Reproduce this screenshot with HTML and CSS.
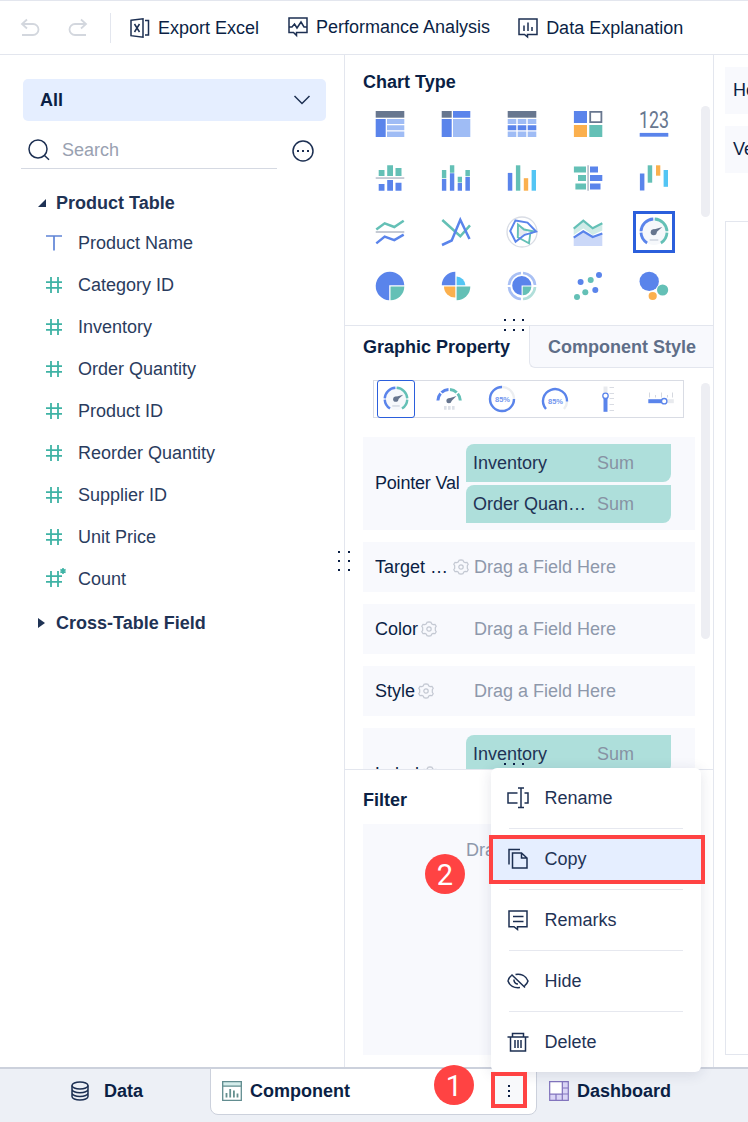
FILE: index.html
```html
<!DOCTYPE html>
<html lang="en">
<head>
    <meta charset="UTF-8">
    <meta name="viewport" content="width=device-width, initial-scale=1.0">
    <title>Component</title>
    <link rel="stylesheet" href="styles.css">
</head>
<body>
    <!-- shared icons -->
    <svg class="sprite">
        <symbol id="hash" viewBox="0 0 18 18"><path d="M6 1v16M13 1v16M1 6.200h16M1 11.800h16" fill="none" stroke="#3fb3a5" stroke-width="1.800"/></symbol>
        <symbol id="gear" viewBox="0 0 16 16"><g fill="none" stroke="#c3c8d2" stroke-width="1.200"><path d="M8 .8l2 .4.6 1.700 1.500.7 1.900-.3 1.200 1.900-.9 1.500v2.600l.9 1.500-1.200 1.900-1.900-.3-1.500.8-.6 1.500-2 .4-2-.4-.6-1.500-1.500-.8-1.900.3L.8 10.800l.9-1.500V6.700L.8 5.200 2 3.300l1.900.3 1.500-.7.6-1.700z"/><circle cx="8" cy="8" r="2.200"/></g></symbol>
        <symbol id="gauge" viewBox="0 0 30 30">
            <circle cx="15" cy="15" r="13" fill="#f6f8fb"/>
            <g fill="none" stroke-width="2.800">
                <path d="M8.100 26A13 13 0 0 1 2 15.700" stroke="#5a84eb"/>
                <path d="M2 14.300A13 13 0 0 1 14.300 2" stroke="#5a84eb"/>
                <path d="M15.700 2A13 13 0 0 1 28 14.300" stroke="#64c0b6"/>
                <path d="M28 15.700A13 13 0 0 1 21.900 26" stroke="#64c0b6"/>
            </g>
            <path d="M14 12.700l9.300-2.700-7 6.300z" fill="#66758e"/>
            <circle cx="14.700" cy="15.200" r="3" fill="#66758e"/>
            <path d="M10.700 23h8.600" stroke="#d8dde6" stroke-width="2"/>
        </symbol>
    </svg>

    <header class="toolbar">
        <svg class="undo" viewBox="0 0 20 20"><path d="M7 1.500L2 6l5 4.500M2 6h11a5.300 5.300 0 0 1 0 11H2" /></svg>
        <svg class="redo" viewBox="0 0 20 20"><path d="M13 1.500L18 6l-5 4.500M18 6H7a5.300 5.300 0 0 0 0 11h11" /></svg>
        <span class="separator"></span>
        <div class="tool excel">
            <svg class="line-icon" viewBox="0 0 20 20"><path d="M1 2.300l12-1.500v18.400L1 17.700zM4.500 6l5 8M9.500 6l-5 8M15 2.500h3.500v14.500H15"/></svg>
            Export Excel
        </div>
        <div class="tool performance">
            <svg class="line-icon" viewBox="0 0 20 20"><path d="M1 1h18v14.500H8.500v3l-3-3H1zM1 10h3l2.500-3 2.500 4 4-6 3 5h3"/></svg>
            Performance Analysis
        </div>
        <div class="tool explain">
            <svg class="line-icon" viewBox="0 0 20 20"><path d="M1 1h18v15.500H9.500v2.500l-3-2.500H1zM6 7.500V13M10 4.500V13M14 9V13"/></svg>
            Data Explanation
        </div>
    </header>

    <main class="workspace">
        <section class="fields">
            <div class="select">
                <span>All</span>
                <svg class="line-icon chevron" viewBox="0 0 18 10"><path d="M1.500 1l7.500 7.500L16.500 1"/></svg>
            </div>
            <div class="search-row">
                <div class="search">
                    <svg class="line-icon" viewBox="0 0 22 22"><circle cx="10" cy="10" r="9"/><path d="M16.500 16.500l4.500 4.300"/></svg>
                    <span>Search</span>
                </div>
                <svg class="line-icon more" viewBox="0 0 22 22"><circle cx="11" cy="11" r="10"/><path class="dots" d="M5 10h2v2H5zM10 10h2v2h-2zM15 10h2v2h-2z"/></svg>
            </div>
            <div class="group">
                <svg viewBox="0 0 10 10"><path d="M9 1v8H1z"/></svg>
                Product Table
            </div>
            <ul class="field-list">
                <li><svg viewBox="0 0 18 18"><path d="M1 2h16M9 2v14.500" fill="none" stroke="#5f84d6" stroke-width="1.700"/></svg>Product Name</li>
                <li><svg><use href="#hash"/></svg>Category ID</li>
                <li><svg><use href="#hash"/></svg>Inventory</li>
                <li><svg><use href="#hash"/></svg>Order Quantity</li>
                <li><svg><use href="#hash"/></svg>Product ID</li>
                <li><svg><use href="#hash"/></svg>Reorder Quantity</li>
                <li><svg><use href="#hash"/></svg>Supplier ID</li>
                <li><svg><use href="#hash"/></svg>Unit Price</li>
                <li><svg><use href="#hash"/><path d="M18 -2v6M15.400 -.5l5.200 3M20.600 -.5l-5.200 3" stroke="#3fb3a5" stroke-width="1.600"/></svg>Count</li>
            </ul>
            <div class="group cross">
                <svg viewBox="0 0 10 10"><path d="M1 0l7 5-7 5z"/></svg>
                Cross-Table Field
            </div>
            <div class="grip vertical"><i></i><i></i><i></i><i></i><i></i><i></i></div>
        </section>

        <section class="config">
            <div class="chart-type">
                <h2>Chart Type</h2>
                <div class="charts">
                    <div class="chart"><svg viewBox="0 0 30 30"><path fill="#68778f" d="M.7 2h28.600v6.700H.7z"/><path fill="#5a84eb" d="M.7 10H10.700v18H.7z"/><path fill="#9fbcf5" d="M12 10h17.300v5H12zM12 16.200h17.300v5H12zM12 22.500h17.300V28H12z"/></svg></div>
                    <div class="chart"><svg viewBox="0 0 30 30"><path fill="#68778f" d="M.7 2h10v6.700h-10z"/><path fill="#5a84eb" d="M12 2h17.300v6.700H12zM.7 10h10v18h-10z"/><path fill="#9fbcf5" d="M12 10h17.300v18H12z"/></svg></div>
                    <div class="chart"><svg viewBox="0 0 30 30"><path fill="#68778f" d="M.7 2h28.600v6.700H.7z"/><path fill="#9fbcf5" d="M.7 10h8.600v5H.7zM10.700 10h8.600v5h-8.600zM20.700 10h8.600v5h-8.600zM.7 22.500h8.600V28H.7zM10.700 22.500h8.600V28h-8.600zM20.700 22.500h8.600V28h-8.600z"/><path fill="#5a84eb" d="M.7 16.200h8.600v5H.7zM10.700 16.200h8.600v5h-8.600zM20.700 16.200h8.600v5h-8.600z"/></svg></div>
                    <div class="chart"><svg viewBox="0 0 30 30"><path fill="#5a84eb" d="M.9 2H14v12H.9z"/><path fill="none" stroke="#68778f" stroke-width="1.800" d="M17.200 2.900h11.200v10.200H17.200z"/><path fill="#fbb04e" d="M.9 16H14v12H.9z"/><path fill="#64c0b6" d="M16.300 16h13v12h-13z"/></svg></div>
                    <div class="chart"><svg viewBox="0 0 30 30"><text class="digits" x="0" y="19.300" textLength="30" lengthAdjust="spacingAndGlyphs">123</text><path fill="#5a84eb" d="M.7 23.900h28.600v3.800H.7z"/></svg></div>

                    <div class="chart"><svg viewBox="0 0 30 30"><path fill="#64c0b6" d="M3.700 7h5.800v6H3.700zM12.200 2.300H18V13h-5.800zM20.500 5h6v8h-6z"/><path fill="#bfc5d0" d="M.7 14.200h28.600v1.700H.7z"/><path fill="#5a84eb" d="M3.700 21h5.800v6.700H3.700zM12.200 17H18v10.700h-5.800zM20.500 19.700h6v8h-6z"/></svg></div>
                    <div class="chart"><svg viewBox="0 0 30 30"><path fill="#64c0b6" d="M.9 7h4.400v8.300H.9zM8.900 2.300h4.400v7.500H8.900zM16.700 13.700H21v5.700h-4.300zM24.400 7h4.500v6.300h-4.500z"/><path fill="#5a84eb" d="M.9 15.900h4.400v11.800H.9zM8.900 10.200h4.400v17.500H8.900zM16.700 20H21v7.700h-4.300zM24.400 14h4.500v13.700h-4.500z"/></svg></div>
                    <div class="chart"><svg viewBox="0 0 30 30"><path fill="#5a84eb" d="M.8 9.900h4.500v17.800H.8z"/><path fill="#64c0b6" d="M8.900 2.300h4.400v25.400H8.900z"/><path fill="#fbb04e" d="M16.800 15.200h4.400v12.500h-4.400z"/><path fill="#53c5f4" d="M24.600 7H29v20.700h-4.400z"/></svg></div>
                    <div class="chart"><svg viewBox="0 0 30 30"><path fill="#64c0b6" d="M.9 3.500H13v6H.9zM5 12h8v6H5zM2.400 20.400H13v6H2.400z"/><path fill="#bfc5d0" d="M14.200 2.300H16v25.400h-1.800z"/><path fill="#5a84eb" d="M17 3.500h8v6h-8zM17 12h12.300v6H17zM17 20.400h10.500v6H17z"/></svg></div>
                    <div class="chart"><svg viewBox="0 0 30 30"><path fill="#5a84eb" d="M.9 10.500h4.500v17H.9z"/><path fill="#64c0b6" d="M8.700 2.300h4.500v17.400H8.700z"/><path fill="#fbb04e" d="M17 2.300h4.300v10.400H17z"/><path fill="#53c5f4" d="M24.600 7H29v16.800h-4.400z"/></svg></div>

                    <div class="chart"><svg viewBox="0 0 30 30"><g fill="none" stroke-width="2.500"><path stroke="#64c0b6" d="M1.300 12.600l8.400-6.300L19.300 10 28.700 3.700"/><path stroke="#bfc5d0" stroke-width="1.800" d="M.7 15h28.600"/><path stroke="#5a84eb" d="M1.300 26.400l8.400-6.800 9.600 3.500 9.400-5.400"/></g></svg></div>
                    <div class="chart"><svg viewBox="0 0 30 30"><g fill="none" stroke-width="2.500"><path stroke="#64c0b6" d="M1.300 3l18 16.300L29 8.300"/><path stroke="#5a84eb" d="M1 28l9.700-4.500 8.600-20.700L28.500 22"/></g></svg></div>
                    <div class="chart"><svg viewBox="0 0 30 30"><g fill="none"><circle cx="15" cy="15" r="15" stroke="#d9dde5" stroke-width="1.300"/><circle cx="15" cy="15" r="5" fill="#e8ebf0"/><path stroke="#64c0b6" stroke-width="1.900" d="M11 7.500l6 5 10 2-3.700 2L22 26.300l-11.200-6z"/><path stroke="#5a84eb" stroke-width="2" d="M8.500 3.400l12 2.200 8.600 9-11.500 3.200-9 6.900L3.200 14z"/></g></svg></div>
                    <div class="chart"><svg viewBox="0 0 30 30"><path fill="#cfebe7" d="M.7 11.500L10.300 4l9.400 7.500 9.600-5v7L19.700 18l-9.400-6.500L.7 18z"/><path fill="#cbd8f8" d="M.7 20.700l9.600-6.400 9.400 5.700 9.600-3.500V29H.7z"/><g fill="none" stroke-width="2.200"><path stroke="#64c0b6" d="M.7 11.600l9.600-7.900 9.400 7.600 9.600-5"/><path stroke="#5a84eb" d="M.7 20.700l9.600-6.400 9.400 5.700 9.600-3.500"/></g></svg></div>
                    <div class="chart active"><svg><use href="#gauge"/></svg></div>

                    <div class="chart"><svg viewBox="0 0 30 30"><path fill="#5a84eb" d="M14.200 14.200V29.300A14.300 14.300 0 1 1 29.300 14.200z"/><path fill="#64c0b6" d="M15.500 15.500h13.800A13.800 13.800 0 0 1 15.500 29.300z"/></svg></div>
                    <div class="chart"><svg viewBox="0 0 30 30"><path fill="#5a84eb" d="M14.300 14.300V.8A13.500 13.500 0 0 0 .8 14.300z"/><path fill="#53c5f4" d="M15.600 14.300V5.500a9 9 0 0 1 8.800 8.800z"/><path fill="#fbb04e" d="M14.300 15.600v11A11 11 0 0 1 3 15.600z"/><path fill="#64c0b6" d="M15.600 15.600h13.700a13.600 13.600 0 0 1-13.700 13.700z"/></svg></div>
                    <div class="chart"><svg viewBox="0 0 30 30"><g fill="none" stroke-width="2.700"><path stroke="#a9c0f4" d="M16 2a13 13 0 0 1 12 12M2 14A13 13 0 0 1 14 2M14 28A13 13 0 0 1 2 16"/><path stroke="#b1dfda" d="M28 16a13 13 0 0 1-12 12"/></g><path fill="#5a84eb" d="M14.600 14.400v9.800a9.600 9.600 0 1 1 9.800-9.800z"/><path fill="#64c0b6" d="M15.700 15.600h8.700a9 9 0 0 1-8.700 8.700z"/></svg></div>
                    <div class="chart"><svg viewBox="0 0 30 30"><g fill="#64c0b6"><circle cx="4" cy="26" r="3"/><circle cx="12.300" cy="21.300" r="3"/><circle cx="17.700" cy="9" r="3"/></g><g fill="#5a84eb"><circle cx="22.300" cy="19" r="3"/><circle cx="7.600" cy="11" r="3"/><circle cx="26" cy="4" r="3"/></g></svg></div>
                    <div class="chart"><svg viewBox="0 0 30 30"><circle cx="10.200" cy="10.400" r="9.700" fill="#5a84eb"/><circle cx="23.600" cy="19" r="5.600" fill="#64c0b6"/><circle cx="13.700" cy="25" r="4.100" fill="#fbb04e"/></svg></div>
                </div>
                <div class="scrollbar"></div>
            </div>

            <div class="property">
                <div class="tabs">
                    <div class="tab current">Graphic Property</div>
                    <div class="tab">Component Style</div>
                </div>
                <div class="styles">
                    <div class="style active"><svg><use href="#gauge"/></svg></div>
                    <div class="style"><svg viewBox="0 0 26 26"><g fill="none" stroke-width="3"><path stroke="#5a84eb" d="M1.900 14.500a11 11 0 0 1 2.700-6.900M5.500 6.500A11 11 0 0 1 12.500 3.500"/><path stroke="#64c0b6" d="M14 3.500a11 11 0 0 1 6.700 3M21.700 7.600a11 11 0 0 1 2.600 6.900"/></g><path d="M12.500 12.500l8-2.500-6 6z" fill="#66758e"/><circle cx="12.900" cy="14.800" r="2.500" fill="#66758e"/><path fill="#dde1e8" d="M8 20h2.600v3.800H8zM12 20h2.600v3.800H12zM16 20h2.600v3.800H16z"/></svg></div>
                    <div class="style"><svg viewBox="0 0 26 26"><g fill="none" stroke-width="2.400"><circle cx="13" cy="13" r="12" stroke="#eceef1"/><path stroke="#5a84eb" d="M25 13A12 12 0 1 1 13 1"/></g><text class="percent" x="13.500" y="15.700">85%</text></svg></div>
                    <div class="style"><svg viewBox="0 0 26 26"><g fill="none" stroke-width="2.400"><path stroke="#eceef1" d="M25 15.500a12 12 0 0 1-3 7.500"/><path stroke="#5a84eb" d="M4 23A12 12 0 1 1 25 15.500"/></g><text class="percent" x="13.500" y="17.700">85%</text></svg></div>
                    <div class="style"><svg viewBox="0 0 26 26"><path fill="none" stroke="#e8eaee" d="M10.500 .5v13" stroke-width="4"/><path stroke="#d9dce3" d="M14.500 1.500H19M14.500 7.500H19M14.500 12.500H19M14.500 18.500H19M14.500 24.500H19"/><path stroke="#5a84eb" stroke-width="4" d="M10.500 10v15.800"/><circle cx="10.500" cy="9.800" r="2.700" fill="#fff" stroke="#5a84eb" stroke-width="1.300"/></svg></div>
                    <div class="style"><svg viewBox="0 0 26 26"><path stroke="#e8eaee" stroke-width="4" d="M15 15.200h10.800"/><path stroke="#d5d8df" d="M1.500 6.500v5M7.500 9v2.500M13.500 6.500v5M19.500 9v2.500M24.500 6.500v5"/><path stroke="#5a84eb" stroke-width="4" d="M.3 15.200H16"/><circle cx="16.200" cy="15.200" r="2.700" fill="#fff" stroke="#5a84eb" stroke-width="1.300"/></svg></div>
                </div>
                <div class="rows">
                    <div class="row">
                        <div class="label pointer">Pointer Value</div>
                        <div class="chips">
                            <div class="chip"><span>Inventory</span><em>Sum</em></div>
                            <div class="chip"><span>Order Quantity</span><em>Sum</em></div>
                        </div>
                    </div>
                    <div class="row">
                        <div class="label wide"><span class="target">Target Value</span><svg><use href="#gear"/></svg></div>
                        <div class="hint">Drag a Field Here</div>
                    </div>
                    <div class="row">
                        <div class="label">Color<svg><use href="#gear"/></svg></div>
                        <div class="hint">Drag a Field Here</div>
                    </div>
                    <div class="row">
                        <div class="label">Style<svg><use href="#gear"/></svg></div>
                        <div class="hint">Drag a Field Here</div>
                    </div>
                    <div class="row">
                        <div class="label bottom-label">Label<svg><use href="#gear"/></svg></div>
                        <div class="chips">
                            <div class="chip"><span>Inventory</span><em>Sum</em></div>
                            <div class="chip"><span>Order Quantity</span><em>Sum</em></div>
                        </div>
                    </div>
                </div>
                <div class="scrollbar"></div>
                <div class="grip"><i></i><i></i><i></i><i></i><i></i><i></i></div>
            </div>

            <div class="filter">
                <h2>Filter</h2>
                <div class="drop">Drag a Field Here</div>
                <div class="grip"><i></i><i></i><i></i></div>
            </div>
        </section>

        <section class="canvas">
            <div class="axis">Horizontal Axis</div>
            <div class="axis">Vertical Axis</div>
            <div class="preview"></div>
        </section>
    </main>

    <footer class="bottom">
        <div class="page data">
            <svg class="line-icon" viewBox="0 0 20 20"><ellipse cx="10" cy="4.500" rx="8" ry="3.500"/><path d="M2 4.500v11c0 2 3.600 3.500 8 3.500s8-1.500 8-3.500v-11M2 8.300c0 2 3.600 3.500 8 3.500s8-1.500 8-3.500M2 12c0 2 3.600 3.500 8 3.500s8-1.500 8-3.500"/></svg>
            Data
        </div>
        <div class="page component">
            <svg viewBox="0 0 20 20"><g fill="none" stroke="#628d90" stroke-width="1.300"><path fill="#fff" d="M.7.7h18.600v18.600H.7z"/><path fill="#d5edeb" d="M.7.7h18.600v4.500H.7z"/></g><path stroke="#64908f" stroke-width="1.800" d="M4.500 12v4.500M8.200 8v8.500M11.900 9.500v7M15.500 12.500v4"/></svg>
            Component
        </div>
        <div class="page dashboard">
            <svg viewBox="0 0 20 20"><path fill="#dad5f6" stroke="#8274bd" stroke-width="1.200" d="M.7.700h18.600v18.600H.7zM13.300 7h6M13.300 13h6M7 13v6.300M13.300.7v18.600M.7 13h12.600"/><path fill="#fff" stroke="#8274bd" stroke-width="1.200" d="M.7.700h12.600V13H.7z"/></svg>
            Dashboard
        </div>
    </footer>

    <div class="menu">
        <div class="item"><svg class="line-icon" viewBox="0 0 22 22"><path d="M10.500 6H1v10h9.500M17.500 6H21v10h-3.500M11 1h6M11 20.500h6M14 1v19.500"/></svg>Rename</div>
        <div class="item copy"><svg class="line-icon" viewBox="0 0 22 22"><path d="M2 16.500V1.500h11M5.500 5h9l5.500 5v10H5.500zM14.500 5v5h5.500"/></svg>Copy</div>
        <div class="item"><svg class="line-icon" viewBox="0 0 22 22"><path d="M2 2h18v15.700H10.500v2.800l-3.500-2.800H2zM6 7.500h10.500M6 12.500h10.500"/></svg>Remarks</div>
        <div class="item"><svg class="line-icon" viewBox="0 0 22 22"><path d="M4.500 5.500C2.500 7 1.300 9 1 11c1.500 4 5.500 6.800 10 6.800l2-.2M8.500 4.500c5.500-1 10.500 1.500 12.500 6.500-.5 1.700-1.700 3.500-3.500 4.900M4.500 4.500l13.500 13M7 9.500a4 4 0 0 0 4 4.500"/></svg>Hide</div>
        <div class="item"><svg class="line-icon" viewBox="0 0 22 22"><path d="M.5 6h21M5.500 6V2.500h11V6M3.500 6v14h15V6M8 9v8M11 9v8M14 9v8"/></svg>Delete</div>
    </div>

    <!-- step marks -->
    <div class="mark-copy"></div>
    <div class="mark-more"><i></i><i></i><i></i></div>
    <div class="step one">1</div>
    <div class="step two">2</div>
</body>
</html>
```
FILE: styles.css
```css
*{
    box-sizing: border-box;
}
body{
    margin:0;
    height:1122px;
    display: flex;
    flex-direction: column;
    position: relative;
    overflow: hidden;
    background:#fff;
    color:#0b1f45;
    font-family: "Liberation Sans", Arial, sans-serif;
    font-size:18px;
    line-height:22px;
    white-space: nowrap;
}
svg{
    display: block;
    flex:none;
    overflow: visible;
}
h2{
    margin:0;
    font-size:18px;
    font-weight: bold;
}
.sprite{
    position: absolute;
    width:0;
    height:0;
}
.line-icon{
    width:20px;
    height:20px;
    fill:none;
    stroke:#1c2f52;
    stroke-width:1.5;
}

/* top toolbar */
.toolbar{
    height:55px;
    flex:none;
    display: flex;
    align-items: center;
    border-top:1px solid #e3e6ee;
    border-bottom:1px solid #e3e6ee;
    padding-left:20px;
}
.undo,
.redo{
    width:20px;
    height:20px;
    fill:none;
    stroke:#d3d7de;
    stroke-width:1.8;
}
.redo{
    margin-left:28px;
}
.separator{
    width:1px;
    height:30px;
    margin:0 19px 0 22px;
    background:#e3e6ee;
}
.tool{
    display: flex;
    align-items: center;
    gap:8px;
}
.performance{
    margin:-2px 0 0 29px;
}
.explain{
    margin-left:28px;
}

.workspace{
    flex:1;
    min-height:0;
    display: flex;
}

/* fields */
.fields{
    width:345px;
    flex:none;
    position: relative;
    padding:24px 18px 0 21px;
    border-right:1px solid #e3e6ee;
}
.select{
    height:42px;
    margin-left:2px;
    padding:0 15px 0 17px;
    display: flex;
    align-items: center;
    justify-content: space-between;
    background:#e5eeff;
    border-radius:5px;
    font-weight: bold;
}
.chevron{
    width:18px;
    height:10px;
}
.search-row{
    display: flex;
    align-items: center;
    gap:15px;
    height:48px;
}
.search{
    width:256px;
    height:48px;
    display: flex;
    align-items: center;
    gap:12px;
    padding:10px 0 0 7px;
    border-bottom:1px solid #d5d9e2;
    color:#99a1b1;
}
.search svg{
    width:22px;
    height:22px;
}
.more{
    width:22px;
    height:22px;
    margin-top:12px;
}
.more .dots{
    fill:#1c2f52;
    stroke:none;
}
.group{
    display: flex;
    align-items: center;
    height:42px;
    margin-top:13px;
    padding-left:16px;
    gap:9px;
    font-weight: bold;
    color:#1f3355;
}
.group svg{
    width:10px;
    height:10px;
    fill:#1f3355;
}
.field-list{
    list-style: none;
    margin:-2px 0 0;
    padding:0 0 0 24px;
    color:#2a3c5e;
}
.field-list li{
    display: flex;
    align-items: center;
    gap:15px;
    height:42px;
}
.field-list svg{
    width:18px;
    height:18px;
}
.cross{
    margin-top:2px;
}

/* drag handles */
.grip{
    position: absolute;
    z-index:2;
    display: grid;
    grid-template-columns: repeat(3, 2px);
    gap:8px 7px;
    left:159px;
    top:-7px;
}
.grip i{
    width:2px;
    height:2px;
    background:#0b1f45;
}
.grip.vertical{
    grid-template-columns: repeat(2, 2px);
    gap:7px 8px;
    left:338px;
    top:496px;
}

/* chart configuration */
.config{
    width:369px;
    flex:none;
    display: flex;
    flex-direction: column;
    border-right:1px solid #e3e6ee;
}
.chart-type{
    height:270px;
    flex:none;
    position: relative;
    padding:16px 18px 0;
}
.charts{
    display: grid;
    grid-template-columns: repeat(5, 42px);
    gap:12px 24px;
    margin-top:10px;
    padding-left:6px;
}
.chart{
    height:42px;
    display: flex;
    align-items: center;
    justify-content: center;
}
.chart svg{
    width:30px;
    height:30px;
}
.chart.active{
    border:3px solid #2b5fdc;
}
.digits{
    font-family: Roboto, sans-serif;
    font-size:23px;
    fill:#68778f;
}
.scrollbar{
    position: absolute;
    right:3px;
    top:51px;
    width:9px;
    height:111px;
    border-radius:5px;
    background:#edeef3;
}
.property{
    height:444px;
    flex:none;
    position: relative;
    border-top:1px solid #e3e6ee;
}
.property .scrollbar{
    top:57px;
    height:256px;
}
.tabs{
    display: flex;
    height:42px;
}
.tab{
    width:184px;
    padding:10px 0 0 18px;
    font-weight: bold;
    color:#5f6e88;
    background:#f8f9fd;
    border-left:1px solid #e3e6ee;
    border-bottom:1px solid #e3e6ee;
    border-bottom-left-radius:6px;
}
.tab.current{
    color:#0b1f45;
    background:none;
    border:none;
}
.styles{
    display: flex;
    gap:15px;
    width:311px;
    height:38px;
    margin:12px 0 0 28px;
    padding-left:3px;
    border:1px solid #d9dce4;
}
.style{
    width:38px;
    height:38px;
    flex:none;
    margin-top:-1px;
    display: flex;
    align-items: center;
    justify-content: center;
}
.style svg{
    width:26px;
    height:26px;
}
.style.active{
    border:1px solid #2b5fdc;
    border-radius:3px;
}
.percent{
    font-size:7.5px;
    font-weight: bold;
    fill:#7497ee;
    text-anchor: middle;
}
.rows{
    height:351px;
    padding:19px 18px 0;
    display: flex;
    flex-direction: column;
    gap:12px;
    overflow: hidden;
}
.row{
    min-height:50px;
    flex:none;
    display: flex;
    align-items: center;
    padding:7px 0 7px 12px;
    background:#f8f9fd;
}
.label{
    width:84px;
    margin-right:7px;
    flex:none;
    display: flex;
    align-items: center;
    gap:3px;
    overflow: hidden;
}
.label svg{
    width:16px;
    height:16px;
}
.label.pointer{
    margin-bottom:2px;
    letter-spacing:-0.2px;
}
.label.bottom-label{
    margin-bottom:2px;
}
.label.wide{
    width:95px;
    margin-right:-4px;
}
.target{
    width:75px;
    overflow: hidden;
    text-overflow: ellipsis;
}
.hint{
    padding-left:8px;
    color:#8e98ab;
}
.chips{
    display: flex;
    flex-direction: column;
    gap:3px;
}
.chip{
    width:205px;
    height:38px;
    display: flex;
    align-items: center;
    padding-left:7px;
    background:#aedfdb;
    border-radius:8px 0 8px 0;
    color:#1f3355;
}
.chip span{
    width:114px;
    margin-right:10px;
    overflow: hidden;
    text-overflow: ellipsis;
}
.chip em{
    font-style: normal;
    color:#8792a3;
}
.filter{
    flex:1;
    position: relative;
    padding:19px 18px 0;
    border-top:1px solid #e3e6ee;
}
.drop{
    height:231px;
    margin-top:13px;
    padding:15px 0 0 103px;
    background:#f8f9fd;
    color:#8e98ab;
}

/* preview area */
.canvas{
    flex:1;
    min-width:0;
    overflow: hidden;
    padding:12px 0 0 11px;
}
.axis{
    height:47px;
    padding:12px 0 0 8px;
    margin-bottom:12px;
    background:#f8f9fd;
}
.preview{
    width:400px;
    height:834px;
    margin-top:48px;
    border:1px solid #e3e6ee;
}

/* page tabs */
.bottom{
    height:55px;
    flex:none;
    display: flex;
    background:#edf0f6;
    border-top:2px solid #ccd1dc;
    font-weight: bold;
}
.page{
    display: flex;
    align-items: center;
    height:44px;
    gap:8px;
}
.page svg{
    width:20px;
    height:20px;
}
.data{
    width:210px;
    padding-left:70px;
    gap:14px;
}
.component{
    width:327px;
    height:47px;
    margin-top:-1px;
    padding:0 0 2px 11px;
    background:#fff;
    border:1px solid #ccd1dc;
    border-radius:0 0 8px 8px;
}
.dashboard{
    padding-left:12px;
}

/* context menu */
.menu{
    position: absolute;
    left:491px;
    top:768px;
    z-index:3;
    width:210px;
    height:304px;
    background:#fff;
    border-radius:6px;
    box-shadow:0 2px 14px rgba(30,45,80,0.12);
}
.item{
    height:61px;
    display: flex;
    align-items: center;
    gap:16px;
    margin:0 18px;
    border-bottom:1px solid #e6e8ef;
    color:#1f3355;
}
.item svg{
    width:22px;
    height:22px;
    margin:0 0 0 -2.5px;
}
.item:last-child{
    height:60px;
    border-bottom:none;
}
.item.copy{
    height:41px;
    margin:10px 0;
    padding:0 0 2px 18px;
    background:#e5eeff;
    border:none;
    position: relative;
}
.copy::after{
    content:"";
    position: absolute;
    left:18px;
    right:18px;
    bottom:-10px;
    height:1px;
    background:#e6e8ef;
}

.mark-copy{
    position: absolute;
    z-index:4;
    left:489px;
    top:835px;
    width:216px;
    height:49px;
    border:4px solid #ff4343;
}
.mark-more{
    position: absolute;
    z-index:4;
    left:491px;
    top:1072px;
    width:36px;
    height:36px;
    display: flex;
    flex-direction: column;
    align-items: center;
    justify-content: center;
    gap:3px;
    padding-top:1px;
    background:#f8f9fb;
    border:4px solid #ff4343;
}
.mark-more i{
    width:2px;
    height:2px;
    background:#0b1f45;
}
.step{
    position: absolute;
    z-index:4;
    width:40px;
    height:40px;
    border-radius:50%;
    background:#ff4343;
    color:#fff;
    font-family: Roboto, sans-serif;
    font-size:29px;
    line-height:42px;
    text-align: center;
}
.one{
    left:434px;
    top:1065px;
}
.two{
    left:425px;
    top:854px;
}
```
